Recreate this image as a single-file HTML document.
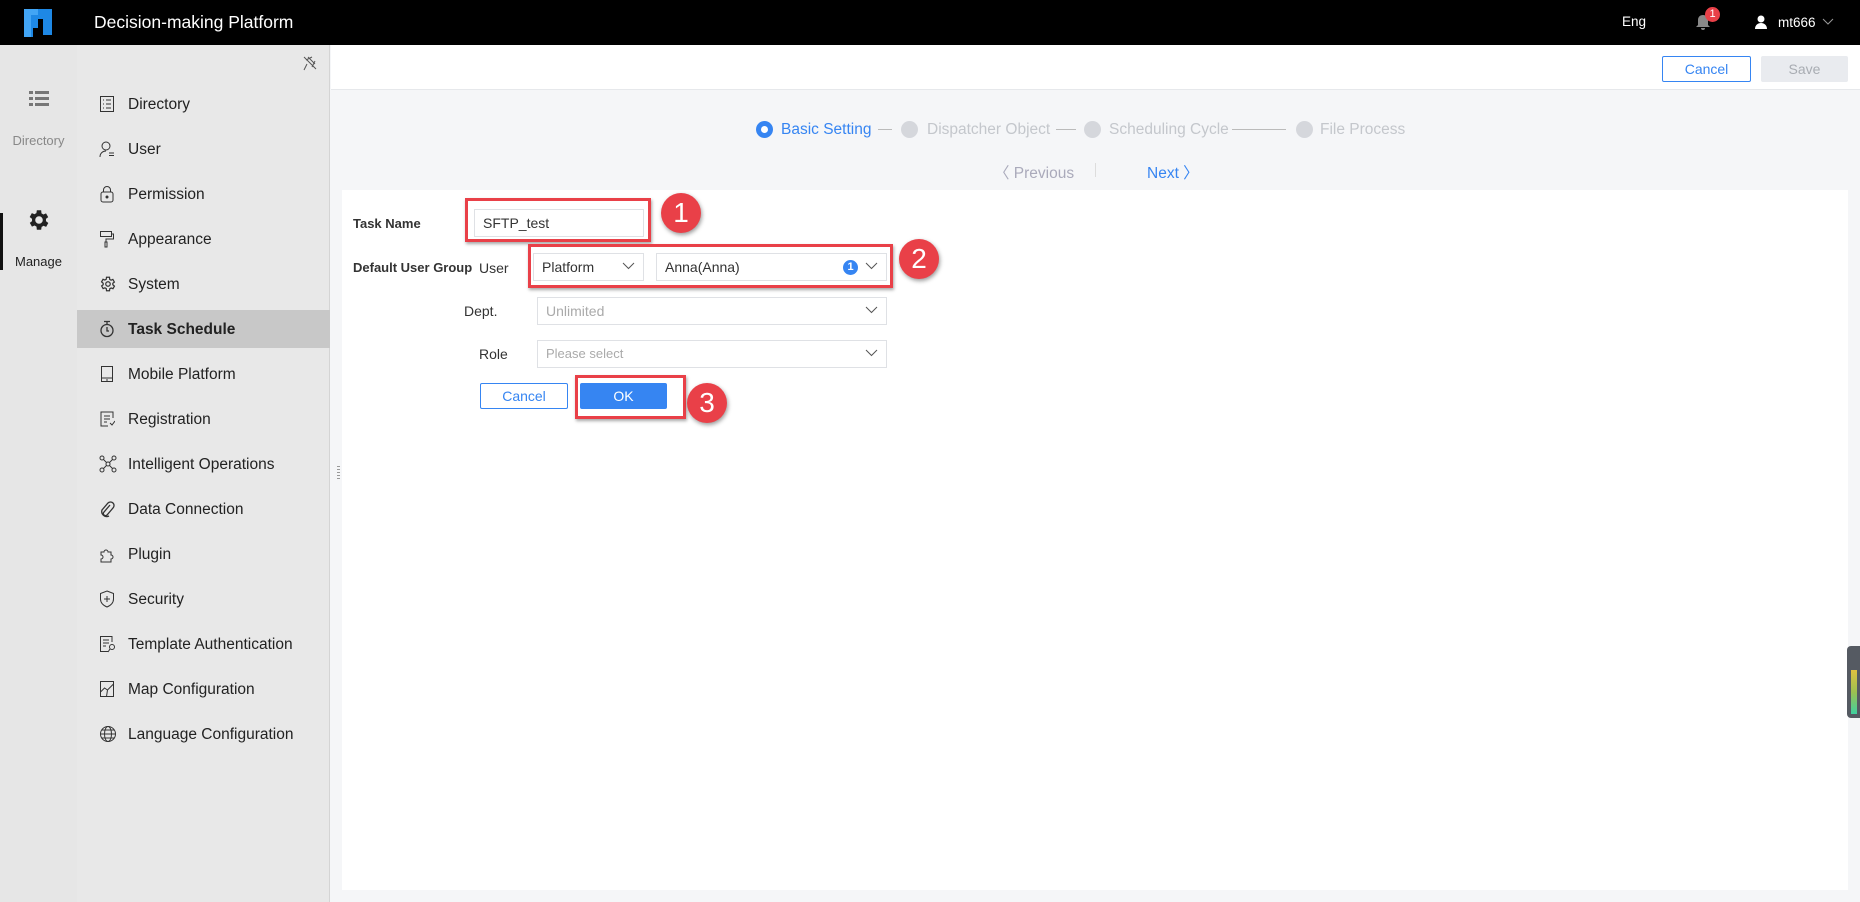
<!DOCTYPE html>
<html><head><meta charset="utf-8"><style>
*{box-sizing:border-box;margin:0;padding:0}
body{width:1860px;height:902px;overflow:hidden;font-family:"Liberation Sans",Arial,sans-serif;background:#f5f6f8;position:relative;color:#333}
.abs{position:absolute}
#hdr{left:0;top:0;width:1860px;height:45px;background:#000}
#col1{left:0;top:45px;width:77px;height:857px;background:#e6e6e6}
#col2{left:77px;top:45px;width:253px;height:857px;background:#e8e8e8;border-right:1px solid #d4d4d4}
.mi{position:absolute;left:77px;width:253px;height:45px;line-height:47px;font-size:15.5px;color:#222}
.mi svg{position:absolute;left:22px;top:14px}
.mi span{position:absolute;left:51px}
.sel{border:1px solid #dfe1e5;background:#fff;height:28px;font-size:14px;line-height:26px;padding-left:8px;color:#333}
.chev{position:absolute;right:8px;top:8px}
.lbl{font-size:14px;color:#333}
.red{border:3px solid #e94048;box-shadow:1px 2px 3px rgba(0,0,0,.35)}
.num{width:40px;height:40px;border-radius:50%;background:#e94048;color:#fff;font-size:28px;text-align:center;line-height:40px;box-shadow:1px 2px 4px rgba(0,0,0,.4)}
</style></head><body>
<div id="hdr" class="abs">
 <svg class="abs" style="left:21px;top:7px" width="34" height="32" viewBox="0 0 34 32"><path d="M3 2h28v26h-9V12h-5v9h-5v9H3z" fill="#1e88e5"/><path d="M3 2h14v6h-7v22H3z" fill="#42a5f5"/></svg>
 <div class="abs" style="left:94px;top:12px;color:#fff;font-size:17.5px">Decision-making Platform</div>
 <div class="abs" style="left:1622px;top:14px;color:#fff;font-size:13.5px">Eng</div>
 <svg class="abs" style="left:1696px;top:14px" width="14" height="16" viewBox="0 0 14 16"><path d="M7 1c3 0 5 2 5 5v5l2 2H0l2-2V6c0-3 2-5 5-5z M5 14h4a2 2 0 0 1-4 0z" fill="#888"/></svg>
 <div class="abs" style="left:1705px;top:7px;width:15px;height:15px;border-radius:50%;background:#e94048;color:#fff;font-size:11px;text-align:center;line-height:15px">1</div>
 <svg class="abs" style="left:1754px;top:15px" width="14" height="14" viewBox="0 0 14 14"><circle cx="7" cy="4" r="3.5" fill="#fff"/><path d="M1 14c0-4 3-6 6-6s6 2 6 6z" fill="#fff"/></svg>
 <div class="abs" style="left:1778px;top:15px;color:#fff;font-size:13.5px">mt666</div>
 <svg class="abs" style="left:1822px;top:18px" width="12" height="8"><path d="M1 1l5 5 5-5" stroke="#999" fill="none"/></svg>
</div>
<div id="col1" class="abs"></div>
<div class="abs" style="left:0;top:213px;width:3px;height:57px;background:#111"></div>
<svg class="abs" style="left:29px;top:90px" width="20" height="16" viewBox="0 0 20 16"><g fill="#777"><rect x="0" y="1" width="4" height="3"/><rect x="6" y="1" width="14" height="3"/><rect x="0" y="7" width="4" height="3"/><rect x="6" y="7" width="14" height="3"/><rect x="0" y="13" width="4" height="3"/><rect x="6" y="13" width="14" height="3"/></g></svg>
<div class="abs" style="left:0;top:133px;width:77px;text-align:center;font-size:13px;color:#888">Directory</div>
<svg class="abs" style="left:26px;top:207px" width="26" height="26" viewBox="0 0 24 24"><path fill="#222" d="M19.4 13a7.5 7.5 0 0 0 0-2l2.1-1.6-2-3.5-2.5 1a7 7 0 0 0-1.7-1L15 3h-4l-.4 2.7a7 7 0 0 0-1.7 1l-2.5-1-2 3.5L6.6 11a7.5 7.5 0 0 0 0 2l-2.1 1.6 2 3.5 2.5-1a7 7 0 0 0 1.7 1L11 21h4l.4-2.7a7 7 0 0 0 1.7-1l2.5 1 2-3.5zM13 15.5A3.5 3.5 0 1 1 13 8.5a3.5 3.5 0 0 1 0 7z" transform="translate(-1 0)"/></svg>
<div class="abs" style="left:0;top:254px;width:77px;text-align:center;font-size:13px;color:#222">Manage</div>
<div id="col2" class="abs"></div>
<svg class="abs" style="left:303px;top:55px" width="14" height="16" viewBox="0 0 14 16"><path d="M5 2l7 7M3 5l6-3M9 12l3-6M4 9l-3 6M1 2l12 12" stroke="#555" fill="none"/></svg>
<div class="abs" style="left:77px;top:310px;width:253px;height:38px;background:#c8c8c8"></div>

<div class="mi" style="top:81px"><svg width="16" height="18" viewBox="0 0 16 18"><rect x="1.5" y="1.5" width="13" height="15" fill="none" stroke="#333"/><path d="M4 5h1M7 5h5M4 9h1M7 9h5M4 13h1M7 13h5" stroke="#333"/></svg><span>Directory</span></div>
<div class="mi" style="top:126px"><svg width="16" height="18" viewBox="0 0 16 18"><circle cx="7" cy="6" r="4" fill="none" stroke="#333"/><path d="M1 17c0-4 3-6 6-6M10 13h5M10 15.5h5" stroke="#333" fill="none"/></svg><span>User</span></div>
<div class="mi" style="top:171px"><svg width="16" height="18" viewBox="0 0 16 18"><rect x="2" y="7" width="12" height="10" rx="2" fill="none" stroke="#333"/><path d="M4.5 7V5a3.5 3.5 0 0 1 7 0v2" fill="none" stroke="#333"/><circle cx="8" cy="12" r="1.5" fill="#333"/></svg><span>Permission</span></div>
<div class="mi" style="top:216px"><svg width="16" height="18" viewBox="0 0 16 18"><rect x="1.5" y="1.5" width="11" height="5" fill="none" stroke="#333"/><path d="M12.5 4h2v5H7v3M6 12h2v5H6z" fill="none" stroke="#333"/></svg><span>Appearance</span></div>
<div class="mi" style="top:261px"><svg width="18" height="18" viewBox="0 0 24 24"><path fill="none" stroke="#333" stroke-width="1.6" d="M19.4 13a7.5 7.5 0 0 0 0-2l2.1-1.6-2-3.5-2.5 1a7 7 0 0 0-1.700-1L15 3h-4l-.4 2.7a7 7 0 0 0-1.7 1l-2.5-1-2 3.5L6.6 11a7.5 7.5 0 0 0 0 2l-2.1 1.6 2 3.5 2.5-1a7 7 0 0 0 1.7 1L11 21h4l.4-2.7a7 7 0 0 0 1.7-1l2.5 1 2-3.5z" transform="translate(-1 0)"/><circle cx="12" cy="12" r="3" fill="none" stroke="#333" stroke-width="1.6"/></svg><span>System</span></div>
<div class="mi" style="top:306px;font-weight:bold"><svg width="16" height="18" viewBox="0 0 16 18"><circle cx="8" cy="10.5" r="6" fill="none" stroke="#333" stroke-width="1.3"/><path d="M5 1.5h6M8 1.5v3M8 7v4h2" stroke="#333" fill="none" stroke-width="1.3"/></svg><span>Task Schedule</span></div>
<div class="mi" style="top:351px"><svg width="16" height="18" viewBox="0 0 16 18"><rect x="2.5" y="1.5" width="11" height="15" fill="none" stroke="#333"/><path d="M2.5 13h11M7 15h2" stroke="#333"/></svg><span>Mobile Platform</span></div>
<div class="mi" style="top:396px"><svg width="16" height="18" viewBox="0 0 16 18"><path d="M14 8V2H2v14h7M5 6h6M5 9h6M5 12h3M11 13l2 2 3-4" stroke="#333" fill="none"/></svg><span>Registration</span></div>
<div class="mi" style="top:441px"><svg width="18" height="18" viewBox="0 0 18 18"><g fill="none" stroke="#333"><circle cx="3" cy="3" r="2"/><circle cx="15" cy="3" r="2"/><circle cx="3" cy="15" r="2"/><circle cx="15" cy="15" r="2"/><circle cx="9" cy="9" r="2"/><path d="M4.5 4.5l3 3M13.5 4.5l-3 3M4.5 13.5l3-3M13.5 13.5l-3-3"/></g></svg><span>Intelligent Operations</span></div>
<div class="mi" style="top:486px"><svg width="16" height="18" viewBox="0 0 16 18"><path d="M11 5l-6 7a2 2 0 0 0 3 3l6-7a3.5 3.5 0 0 0-5-5l-6 7a5 5 0 0 0 7 6" stroke="#333" fill="none" stroke-width="1.3"/></svg><span>Data Connection</span></div>
<div class="mi" style="top:531px"><svg width="18" height="18" viewBox="0 0 18 18"><path d="M2 7h3a2 2 0 1 1 4 0h3v3a2 2 0 1 1 0 4v3H2v-3a2 2 0 1 0 0-4z" stroke="#333" fill="none"/></svg><span>Plugin</span></div>
<div class="mi" style="top:576px"><svg width="16" height="18" viewBox="0 0 16 18"><path d="M8 1l6.5 2.5V9c0 4-3 6.5-6.5 8-3.5-1.5-6.5-4-6.5-8V3.5z M8 6v6M5 9h6" stroke="#333" fill="none"/></svg><span>Security</span></div>
<div class="mi" style="top:621px"><svg width="18" height="18" viewBox="0 0 18 18"><path d="M13 7V1.5H1.5v15H9M4 5h6M4 8h6M4 11h3" stroke="#333" fill="none"/><circle cx="13" cy="12" r="2.5" fill="none" stroke="#333"/><path d="M11 14l-2 3" stroke="#333"/></svg><span>Template Authentication</span></div>
<div class="mi" style="top:666px"><svg width="16" height="18" viewBox="0 0 16 18"><rect x="1.5" y="1.5" width="13" height="15" fill="none" stroke="#333"/><path d="M1.5 12l4-4 3 2 6-6M8.5 10l-1 6.5" stroke="#333" fill="none"/></svg><span>Map Configuration</span></div>
<div class="mi" style="top:711px"><svg width="18" height="18" viewBox="0 0 18 18"><g fill="none" stroke="#333"><circle cx="9" cy="9" r="7.5"/><ellipse cx="9" cy="9" rx="3.5" ry="7.5"/><path d="M1.5 9h15M3 5h12M3 13h12"/></g></svg><span>Language Configuration</span></div>

<div class="abs" style="left:337px;top:466px;width:3px;height:14px;background:repeating-linear-gradient(#999 0 1px,transparent 1px 3px)"></div>

<div class="abs" style="left:331px;top:45px;width:1529px;height:45px;background:#fff;border-bottom:1px solid #e6e8eb"></div>
<div class="abs" style="left:1662px;top:56px;width:89px;height:26px;border:1px solid #3685f2;border-radius:2px;background:#fff;color:#3685f2;font-size:14px;text-align:center;line-height:24px">Cancel</div>
<div class="abs" style="left:1761px;top:56px;width:87px;height:26px;border-radius:2px;background:#e9ebef;color:#a8acb2;font-size:14px;text-align:center;line-height:26px">Save</div>

<div class="abs" style="left:756px;top:121px;width:17px;height:17px;border-radius:50%;background:#3685f2"></div>
<div class="abs" style="left:761px;top:126px;width:7px;height:7px;border-radius:50%;background:#fff"></div>
<div class="abs" style="left:781px;top:121px;font-size:15.5px;color:#3685f2">Basic Setting</div>
<div class="abs" style="left:878px;top:129px;width:14px;height:1px;background:#bbb"></div>
<div class="abs" style="left:901px;top:121px;width:17px;height:17px;border-radius:50%;background:#d5d7dc"></div>
<div class="abs" style="left:927px;top:121px;font-size:15.5px;color:#c4c7cc">Dispatcher Object</div>
<div class="abs" style="left:1056px;top:129px;width:20px;height:1px;background:#bbb"></div>
<div class="abs" style="left:1084px;top:121px;width:17px;height:17px;border-radius:50%;background:#d5d7dc"></div>
<div class="abs" style="left:1109px;top:121px;font-size:15.5px;color:#c4c7cc">Scheduling Cycle</div>
<div class="abs" style="left:1232px;top:129px;width:54px;height:1px;background:#bbb"></div>
<div class="abs" style="left:1296px;top:121px;width:17px;height:17px;border-radius:50%;background:#d5d7dc"></div>
<div class="abs" style="left:1320px;top:121px;font-size:15.5px;color:#c4c7cc">File Process</div>

<div class="abs" style="left:994px;top:161px;font-size:15.5px;color:#aab">〈 Previous</div>
<div class="abs" style="left:1095px;top:163px;width:1px;height:14px;background:#ddd"></div>
<div class="abs" style="left:1147px;top:161px;font-size:15.5px;color:#3685f2">Next 〉</div>

<div class="abs" style="left:342px;top:190px;width:1506px;height:700px;background:#fff"></div>
<div class="abs lbl" style="left:353px;top:216px;font-weight:bold;font-size:13px">Task Name</div>
<div class="abs sel" style="left:474px;top:209px;width:170px">SFTP_test</div>
<div class="abs red" style="left:465px;top:198px;width:186px;height:44px"></div>
<div class="abs num" style="left:661px;top:193px">1</div>

<div class="abs lbl" style="left:353px;top:260px;font-weight:bold;font-size:13px">Default User Group</div>
<div class="abs lbl" style="left:479px;top:260px">User</div>
<div class="abs sel" style="left:533px;top:253px;width:111px">Platform<svg class="chev" width="13" height="8"><path d="M1 1l5.5 5.5L12 1" stroke="#555" fill="none"/></svg></div>
<div class="abs sel" style="left:656px;top:253px;width:231px">Anna(Anna)<div class="abs" style="left:186px;top:6px;width:15px;height:15px;border-radius:50%;background:#3685f2;color:#fff;font-size:11px;font-weight:bold;text-align:center;line-height:15px">1</div><svg class="chev" width="13" height="8"><path d="M1 1l5.5 5.5L12 1" stroke="#555" fill="none"/></svg></div>
<div class="abs red" style="left:528px;top:244px;width:365px;height:44px"></div>
<div class="abs num" style="left:899px;top:239px">2</div>

<div class="abs lbl" style="left:464px;top:303px">Dept.</div>
<div class="abs sel" style="left:537px;top:297px;width:350px;color:#aaa">Unlimited<svg class="chev" width="13" height="8"><path d="M1 1l5.5 5.5L12 1" stroke="#555" fill="none"/></svg></div>
<div class="abs lbl" style="left:479px;top:346px">Role</div>
<div class="abs sel" style="left:537px;top:340px;width:350px;color:#aaa;font-size:13px">Please select<svg class="chev" width="13" height="8"><path d="M1 1l5.5 5.5L12 1" stroke="#555" fill="none"/></svg></div>

<div class="abs" style="left:480px;top:383px;width:88px;height:26px;border:1px solid #3685f2;border-radius:2px;color:#3685f2;font-size:14px;text-align:center;line-height:24px">Cancel</div>
<div class="abs" style="left:580px;top:383px;width:87px;height:26px;background:#3685f2;border-radius:2px;color:#fff;font-size:14px;text-align:center;line-height:26px">OK</div>
<div class="abs red" style="left:575px;top:375px;width:111px;height:44px"></div>
<div class="abs num" style="left:687px;top:383px">3</div>

<div class="abs" style="left:1847px;top:646px;width:13px;height:72px;background:#555a62;border-radius:4px 0 0 4px"></div>
<div class="abs" style="left:1851px;top:670px;width:6px;height:44px;background:linear-gradient(#e0c040,#9dc050,#40d0a0)"></div>
</body></html>
